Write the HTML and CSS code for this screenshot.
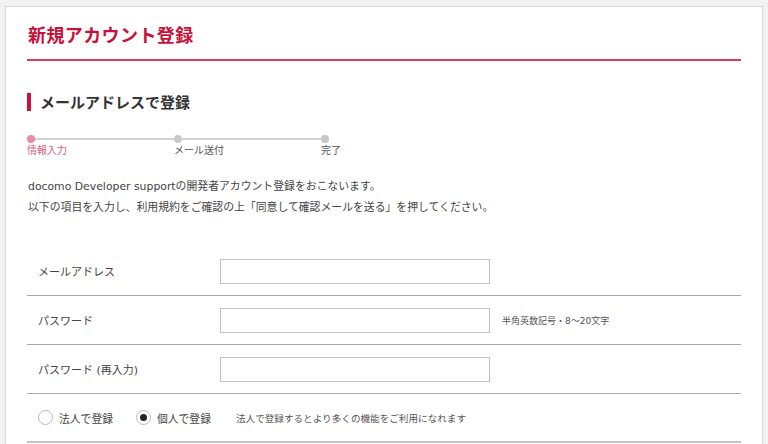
FILE: index.html
```html
<!DOCTYPE html>
<html lang="ja">
<head>
<meta charset="utf-8">
<title>新規アカウント登録</title>
<link rel="stylesheet" href="styles.css">
</head>
<body>
<div class="card">
  <h1 class="page-title">新規アカウント登録</h1>
  <h2 class="section-title">メールアドレスで登録</h2>
  <div class="steps">
    <div class="step active">
      <div class="step-track"><span class="dot"></span><span class="bar"></span></div>
      <div class="step-label">情報入力</div>
    </div>
    <div class="step">
      <div class="step-track"><span class="dot"></span><span class="bar"></span></div>
      <div class="step-label">メール送付</div>
    </div>
    <div class="step last">
      <div class="step-track"><span class="dot"></span></div>
      <div class="step-label">完了</div>
    </div>
  </div>
  <p class="intro">docomo Developer supportの開発者アカウント登録をおこないます。<br>以下の項目を入力し、利用規約をご確認の上「同意して確認メールを送る」を押してください。</p>
  <div class="form">
    <div class="form-row">
      <div class="form-label">メールアドレス</div>
      <div class="form-field"><span class="text-input"></span></div>
    </div>
    <div class="form-row">
      <div class="form-label">パスワード</div>
      <div class="form-field"><span class="text-input"></span><span class="hint">半角英数記号・8〜20文字</span></div>
    </div>
    <div class="form-row">
      <div class="form-label">パスワード (再入力)</div>
      <div class="form-field"><span class="text-input"></span></div>
    </div>
    <div class="form-row radio-row">
      <span class="radio"></span><span class="radio-label">法人で登録</span>
      <span class="radio checked"></span><span class="radio-label">個人で登録</span>
      <span class="radio-note">法人で登録するとより多くの機能をご利用になれます</span>
    </div>
  </div>
</div>
</body>
</html>
```

FILE: styles.css
```css
html, body {
  margin: 0;
  padding: 0;
}
body {
  background: #f3f3f3;
  padding: 6px 5px 0 5px;
  font-family: "DejaVu Sans", "Noto Sans CJK JP", sans-serif;
  color: #444;
  overflow: hidden;
  height: 444px;
  box-sizing: border-box;
}
.card {
  background: #fff;
  border: 1px solid #dadada;
  box-shadow: 0 0 2px rgba(0, 0, 0, 0.08);
  padding: 0 21px 0 21px;
  min-height: 600px;
}
.page-title {
  margin: 0;
  padding: 15px 0 13px 1px;
  font-family: "Noto Sans CJK JP", sans-serif;
  font-size: 18px;
  line-height: 24px;
  font-weight: 700;
  letter-spacing: 0.4px;
  color: #c8103a;
  border-bottom: 2px solid #dc3a58;
}
.section-title {
  margin: 32px 0 0 0;
  padding-left: 9px;
  border-left: 4px solid #c8103a;
  font-family: "Noto Sans CJK JP", sans-serif;
  font-size: 15px;
  line-height: 18px;
  font-weight: 700;
  color: #333;
}
.steps {
  display: flex;
  margin-top: 24px;
  width: 302px;
}
.step {
  width: 147px;
}
.step.last {
  width: 8px;
}
.step-track {
  display: flex;
  align-items: center;
  height: 8px;
}
.dot {
  width: 8px;
  height: 8px;
  border-radius: 50%;
  background: #c8c8c8;
  flex: none;
}
.step.active .dot {
  background: #eb8aa0;
}
.bar {
  flex: 1;
  height: 2px;
  background: #d2d2d2;
}
.step-label {
  font-family: "Noto Sans CJK JP", sans-serif;
  font-size: 10px;
  line-height: 14px;
  color: #555;
  white-space: nowrap;
}
.step.active .step-label {
  color: #e2607e;
}
.intro {
  margin: 19px 0 0 1px;
  font-size: 10.85px;
  line-height: 21px;
  color: #444;
}
.form {
  margin-top: 29px;
}
.form-row {
  display: flex;
  align-items: center;
  height: 48px;
  border-bottom: 1px solid #a8a8a8;
}
.form-row.radio-row {
  height: 47px;
  border-bottom: 2px solid #c4c4c4;
  padding-left: 11px;
}
.form-label {
  width: 182px;
  padding-left: 11px;
  font-size: 11px;
  font-family: "DejaVu Sans", "Noto Sans CJK JP", sans-serif;
  color: #444;
}
.form-field {
  display: flex;
  align-items: center;
}
.text-input {
  display: block;
  width: 268px;
  height: 23px;
  border: 1px solid #c4c4c4;
  background: #fff;
}
.hint {
  margin-left: 12px;
  font-size: 9px;
  color: #555;
}
.radio {
  width: 13px;
  height: 13px;
  border: 1px solid #b8b8b8;
  border-radius: 50%;
  background: #fff;
  display: flex;
  align-items: center;
  justify-content: center;
  flex: none;
}
.radio.checked::after {
  content: "";
  width: 7px;
  height: 7px;
  border-radius: 50%;
  background: #222;
}
.radio-label {
  margin-left: 6px;
  margin-right: 23px;
  font-size: 10.8px;
  color: #444;
}
.radio-note {
  margin-left: 2px;
  font-size: 9.6px;
  color: #555;
}
```
